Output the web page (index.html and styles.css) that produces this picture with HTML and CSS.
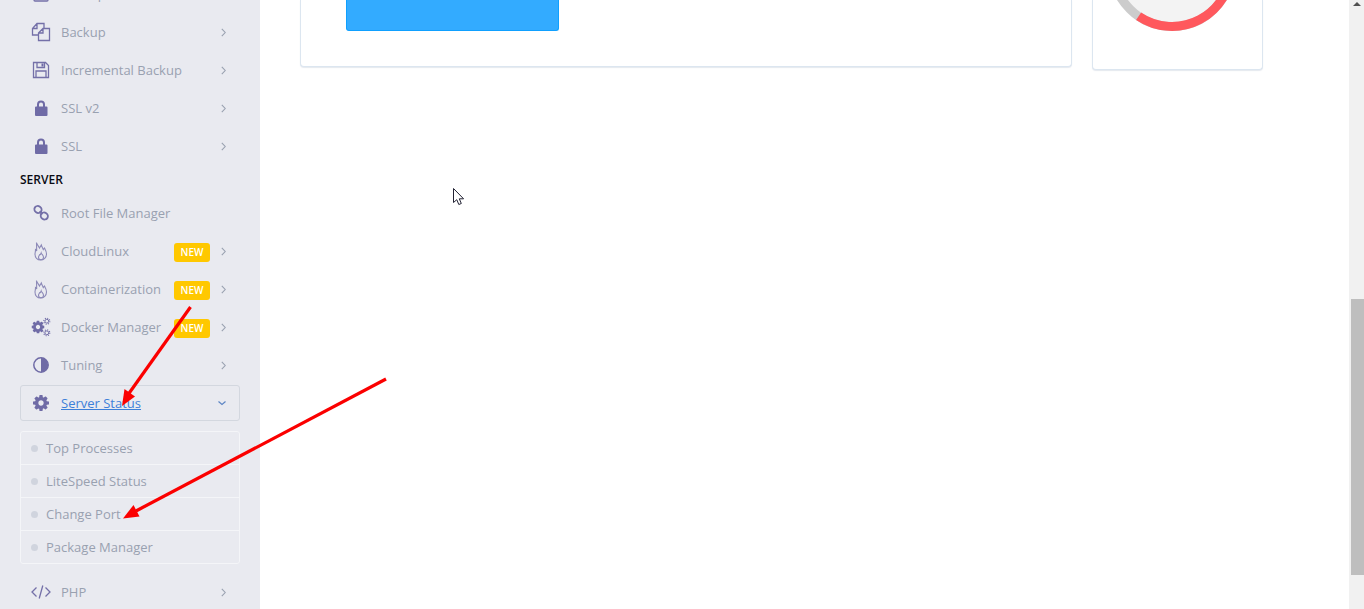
FILE: index.html
```html
<!DOCTYPE html>
<html lang="en">
<head>
    <meta charset="UTF-8">
    <title>Server Status</title>
    <link rel="stylesheet" href="styles.css">
</head>
<body>
    <svg class="defs">
        <defs>
            <symbol id="cog" viewBox="128 128 1536 1536">
                <path d="M1152 896q0-106-75-181t-181-75-181 75-75 181 75 181 181 75 181-75 75-181zm512-109v222q0 12-8 23t-20 13l-185 28q-19 54-39 91 35 50 107 138 10 12 10 25t-9 23q-27 37-99 108t-94 71q-12 0-26-9l-138-108q-44 23-91 38-16 136-29 186-7 28-36 28h-222q-14 0-24.500-8.500t-11.500-21.500l-28-184q-49-16-90-37l-141 107q-10 9-25 9-14 0-25-11-126-114-165-168-7-10-7-23 0-12 8-23 15-21 51-66.500t54-70.500q-27-50-41-99l-183-27q-13-2-21-12.500t-8-23.500v-222q0-12 8-23t19-13l186-28q14-46 39-92-40-57-107-138-10-12-10-24 0-10 9-23 26-36 98.500-107.500t94.500-71.500q13 0 26 10l138 107q44-23 91-38 16-136 29-186 7-28 36-28h222q14 0 24.500 8.500t11.500 21.500l28 184q49 16 90 37l142-107q9-9 24-9 13 0 25 10 129 119 165 170 7 8 7 22 0 12-8 23-15 21-51 66.500t-54 70.500q26 50 41 98l183 28q13 2 21 12.500t8 23.500z"/>
            </symbol>
            <symbol id="chev" viewBox="0 0 5 9">
                <path d="M.8 .8 4.200 4.500 .8 8.200"/>
            </symbol>
            <symbol id="flame" viewBox="0 0 20 20">
                <path d="M5.500 1.500c.3 2 2 3.500 3 5.500l1.800-3c.4 1.500 1.500 3 2 4.500l1.200-1.500c1 1.800 2 3.500 2 6 0 3.500-2.700 6-6 6s-5.500-2.500-5.500-6c0-1 .5-2 .5-4.500 .8 .5 1 1 1.200 1.500z"/>
                <path d="M10.200 12c.3 1.300 2.300 2.200 2.300 4.300 0 1.500-1.100 2.500-2.500 2.500s-2.500-1-2.500-2.500c0-1.100 .7-1.500 1-2.500 .7 .2 1.300-.7 1.700-1.800z"/>
            </symbol>
            <symbol id="lock" viewBox="0 0 20 20">
                <path d="M4.500 8.500h1.500V6.500a4 4 0 0 1 8 0v2h1.500a1 1 0 0 1 1 1V17a1 1 0 0 1-1 1h-10.500a1 1 0 0 1-1-1V9.500a1 1 0 0 1 1-1zM8 8.500h4V6.500a2 2 0 0 0-4 0z"/>
            </symbol>
        </defs>
    </svg>

    <div class="page">
        <div class="sidebar">
            <div class="nav-list">
                <a class="nav-item">
                    <svg class="nav-icon" viewBox="0 0 20 20"><path class="line" d="M4 3h12a1 1 0 0 1 1 1v12a1 1 0 0 1-1 1H4a1 1 0 0 1-1-1V4a1 1 0 0 1 1-1z"/></svg>
                    <span class="nav-text">Backup</span>
                    <svg class="chev"><use href="#chev"/></svg>
                </a>
                <a class="nav-item">
                    <svg class="nav-icon" viewBox="0 0 20 20"><path class="line" d="M7.500 13H1.500V6.500L6 1.500h7V6.500M6 1.500V6.500H1.500M7.500 11 12 6.500h6.500V18.500H7.500zM12 6.500V11H7.500"/></svg>
                    <span class="nav-text">Backup</span>
                    <svg class="chev"><use href="#chev"/></svg>
                </a>
                <a class="nav-item">
                    <svg class="nav-icon" viewBox="0 0 20 20"><path class="line" d="M2.500 2.500h12l3 3v12h-15zM6 2.500v5h7.500v-5M5 17.500v-6.500h10v6.500"/><path class="fill" d="M10.500 3.500h2v3h-2z"/></svg>
                    <span class="nav-text">Incremental Backup</span>
                    <svg class="chev"><use href="#chev"/></svg>
                </a>
                <a class="nav-item">
                    <svg class="nav-icon fill"><use href="#lock"/></svg>
                    <span class="nav-text">SSL v2</span>
                    <svg class="chev"><use href="#chev"/></svg>
                </a>
                <a class="nav-item">
                    <svg class="nav-icon fill"><use href="#lock"/></svg>
                    <span class="nav-text">SSL</span>
                    <svg class="chev"><use href="#chev"/></svg>
                </a>
            </div>

            <div class="nav-heading">SERVER</div>

            <div class="nav-list">
                <a class="nav-item">
                    <svg class="nav-icon" viewBox="0 0 20 20"><ellipse class="thick" cx="7" cy="6.500" rx="3.700" ry="3.300" transform="rotate(35 7 6.500)"/><ellipse class="thick" cx="13.300" cy="13" rx="3.700" ry="3.300" transform="rotate(35 13.300 13)"/><path class="thick" d="M8.500 8.500 11.500 11"/></svg>
                    <span class="nav-text">Root File Manager</span>
                </a>
                <a class="nav-item">
                    <svg class="nav-icon thin"><use href="#flame"/></svg>
                    <span class="nav-text">CloudLinux</span><span class="badge">NEW</span>
                    <svg class="chev"><use href="#chev"/></svg>
                </a>
                <a class="nav-item">
                    <svg class="nav-icon thin"><use href="#flame"/></svg>
                    <span class="nav-text">Containerization</span><span class="badge">NEW</span>
                    <svg class="chev"><use href="#chev"/></svg>
                </a>
                <a class="nav-item">
                    <svg class="nav-icon fill" viewBox="0 0 22 20">
                        <use href="#cog" x="1.500" y="3.500" width="13" height="13"/>
                        <circle class="cog-ring" cx="16.800" cy="4.200" r="1.900"/>
                        <circle class="cog-teeth" cx="16.800" cy="4.200" r="3"/>
                        <circle class="cog-ring" cx="16.800" cy="15.800" r="1.900"/>
                        <circle class="cog-teeth" cx="16.800" cy="15.800" r="3"/>
                    </svg>
                    <span class="nav-text">Docker Manager</span><span class="badge">NEW</span>
                    <svg class="chev"><use href="#chev"/></svg>
                </a>
                <a class="nav-item">
                    <svg class="nav-icon" viewBox="0 0 20 20"><circle class="line-heavy" cx="10" cy="10" r="7.200"/><path class="fill" d="M10 2.800a7.200 7.200 0 0 1 0 14.400z"/></svg>
                    <span class="nav-text">Tuning</span>
                    <svg class="chev"><use href="#chev"/></svg>
                </a>
                <a class="nav-item nav-item-open">
                    <svg class="nav-icon fill" viewBox="0 0 22 20"><use href="#cog" x="3" y="2" width="16" height="16"/></svg>
                    <span class="nav-text nav-link">Server Status</span>
                    <svg class="chev-down" viewBox="0 0 10 6"><path d="M1.500 1.500 5 4.500l3.500-3"/></svg>
                </a>
                <div class="sub-menu">
                    <a class="sub-item">Top Processes</a>
                    <a class="sub-item">LiteSpeed Status</a>
                    <a class="sub-item">Change Port</a>
                    <a class="sub-item">Package Manager</a>
                </div>
                <a class="nav-item">
                    <svg class="nav-icon" viewBox="0 0 20 20"><path class="line" d="M5.500 5.500 1 10l4.500 4.500M14.500 5.500 19 10l-4.500 4.500M11.800 3.500 8.200 16.500"/></svg>
                    <span class="nav-text">PHP</span>
                    <svg class="chev"><use href="#chev"/></svg>
                </a>
            </div>
        </div>

        <div class="content">
            <div class="card card-main">
                <div class="blue-btn"></div>
            </div>
            <div class="card card-gauge">
                <svg class="gauge" viewBox="0 0 130 130">
                    <circle class="gauge-fill" cx="65" cy="65" r="60"/>
                    <circle class="gauge-track" cx="65" cy="65" r="59.500"/>
                    <path class="gauge-value" d="M31.600 114.200A59.500 59.500 0 0 0 124.500 65"/>
                </svg>
            </div>
        </div>

        <div class="scrollbar">
            <div class="scroll-arrow"></div>
            <div class="scroll-thumb"></div>
        </div>
    </div>

    <!-- annotations drawn over the screenshot -->
    <svg class="overlay" viewBox="0 0 1364 609">
        <path class="arrow-line" d="M190.500 307 128.500 394"/>
        <path class="arrow-head" d="M122 406 124.500 389 135 396.500z"/>
        <path class="arrow-line" d="M386 379 136 511"/>
        <path class="arrow-head" d="M123 518.500 133.500 505 139.500 516.500z"/>
        <path class="cursor" d="M453.500 188.500v14l3.300-2.800 2 4.800 2.500-1-2-4.700h4.300z"/>
    </svg>
</body>
</html>
```

FILE: styles.css
```css
body {
    margin: 0;
    height: 609px;
    overflow: hidden;
    background-color: #ffffff;
    font-family: "Open Sans", "Noto Sans", sans-serif;
}
.defs {
    display: none;
}
.page {
    display: flex;
    height: 609px;
    overflow: hidden;
}
.sidebar {
    width: 220px;
    flex-shrink: 0;
    padding: 0 20px;
    background-color: #e9eaf0;
    overflow: hidden;
}
.nav-list {
    display: flex;
    flex-direction: column;
}
.nav-list:first-child {
    margin-top: -25px;
}
.nav-item {
    display: flex;
    align-items: center;
    height: 38px;
    flex-shrink: 0;
    padding: 0 14px 0 10px;
    font-size: 13px;
    color: #99a1b0;
}
.nav-icon {
    width: 22px;
    height: 20px;
    margin-right: 9px;
    flex-shrink: 0;
    overflow: visible;
}
.nav-text {
    flex: 1;
    white-space: nowrap;
}
.line, .thin, .thick, .line-heavy {
    fill: none;
    stroke: #7470a8;
}
.line {
    stroke-width: 1.300;
}
.thin {
    stroke-width: 1.100;
    stroke: #8d8ab8;
}
.thick {
    stroke-width: 1.900;
}
.line-heavy {
    stroke-width: 1.500;
    stroke: #6f6ba6;
}
.fill {
    fill: #6f6ba6;
}
.cog-ring, .cog-teeth {
    fill: none;
    stroke: #7470a8;
}
.cog-ring {
    stroke-width: 1;
}
.cog-teeth {
    stroke-width: 1.100;
    stroke-dasharray: 1.100 1.256;
}
.chev {
    width: 5px;
    height: 9px;
    margin-left: 11px;
    flex-shrink: 0;
    fill: none;
    stroke: #99a1b0;
    stroke-width: 1.100;
}
.badge {
    width: 36px;
    height: 19px;
    line-height: 19px;
    flex-shrink: 0;
    margin-top: 2px;
    text-align: center;
    font-size: 10px;
    font-weight: 600;
    color: #ffffff;
    background-color: #ffc800;
    border-radius: 3px;
}
.nav-heading {
    height: 29px;
    line-height: 30px;
    font-size: 12px;
    font-weight: 600;
    color: #0a0a14;
}
.nav-item-open {
    height: 34px;
    margin-top: 1px;
    border: 1px solid #d3d7df;
    border-radius: 3px;
    padding: 0 12px 0 9px;
}
.nav-link {
    color: #3d7fd9;
    text-decoration: underline;
}
.chev-down {
    width: 10px;
    height: 6px;
    fill: none;
    stroke: #5c85c4;
    stroke-width: 1.200;
}
.sub-menu {
    margin-top: 10px;
    margin-bottom: 9px;
    border: 1px solid #f4f5f8;
    border-radius: 3px;
}
.sub-item {
    display: flex;
    align-items: center;
    height: 32px;
    font-size: 13px;
    color: #99a1b0;
    border-bottom: 1px solid #f4f5f8;
}
.sub-item:last-child {
    border-bottom: none;
}
.sub-item::before {
    content: "";
    width: 7px;
    height: 7px;
    margin: 0 8px 0 10px;
    border-radius: 50%;
    background-color: #d0d4de;
}
.content {
    flex: 1;
    display: flex;
    align-items: flex-start;
    gap: 20px;
    padding-left: 40px;
}
.card {
    box-sizing: border-box;
    background-color: #ffffff;
    border: 1px solid #dce6f0;
    border-top: none;
    border-radius: 0 0 4px 4px;
    box-shadow: 0 1px 1px rgba(190, 200, 215, 0.4);
    flex-shrink: 0;
}
.card-main {
    width: 772px;
    height: 67px;
    padding-left: 45px;
}
.blue-btn {
    width: 213px;
    height: 31px;
    box-sizing: border-box;
    background-color: #33abff;
    border: 1px solid #0fa0ff;
    border-top: none;
    border-radius: 0 0 3px 3px;
}
.card-gauge {
    position: relative;
    width: 171px;
    height: 70px;
    overflow: hidden;
}
.gauge {
    position: absolute;
    left: 14px;
    top: -98px;
    width: 130px;
    height: 130px;
}
.gauge-fill {
    fill: #f3f3f3;
}
.gauge-track, .gauge-value {
    fill: none;
    stroke-width: 9;
}
.gauge-track {
    stroke: #cccccc;
}
.gauge-value {
    stroke: #ff585d;
}
.scrollbar {
    position: relative;
    width: 15px;
    flex-shrink: 0;
    background-color: #f1f1f1;
}
.scroll-arrow {
    position: absolute;
    left: 4px;
    top: 2px;
    border-left: 4px solid transparent;
    border-right: 4px solid transparent;
    border-bottom: 4px solid #505050;
}
.scroll-thumb {
    position: absolute;
    left: 2px;
    top: 299px;
    width: 13px;
    height: 276px;
    background-color: #bebebe;
}
.overlay {
    position: absolute;
    left: 0;
    top: 0;
    width: 1364px;
    height: 609px;
    pointer-events: none;
}
.arrow-line {
    fill: none;
    stroke: #fb0000;
    stroke-width: 3.200;
}
.arrow-head {
    fill: #fb0000;
}
.cursor {
    fill: #ffffff;
    stroke: #222233;
    stroke-width: 1;
}
```
